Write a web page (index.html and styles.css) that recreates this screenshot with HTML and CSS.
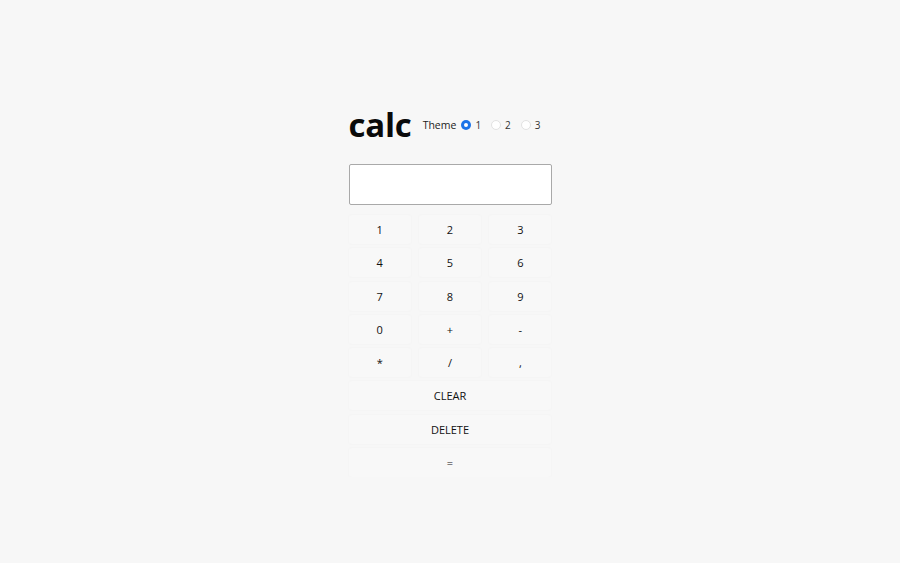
FILE: index.html
```html
<!DOCTYPE html>
<html lang="en">
<head>
<meta charset="utf-8">
<title>calc</title>
<link rel="stylesheet" href="styles.css">
</head>
<body>
<main class="calc">
  <header class="calc-header">
    <h1 class="calc-title">calc</h1>
    <div class="theme">
      <span class="theme-label">Theme</span>
      <label class="theme-opt"><input type="radio" name="theme" checked><span>1</span></label>
      <label class="theme-opt"><input type="radio" name="theme"><span>2</span></label>
      <label class="theme-opt"><input type="radio" name="theme"><span>3</span></label>
    </div>
  </header>
  <div class="display"></div>
  <div class="keys">
    <button class="key">1</button>
    <button class="key">2</button>
    <button class="key">3</button>
    <button class="key">4</button>
    <button class="key">5</button>
    <button class="key">6</button>
    <button class="key">7</button>
    <button class="key">8</button>
    <button class="key">9</button>
    <button class="key">0</button>
    <button class="key">+</button>
    <button class="key">-</button>
    <button class="key">*</button>
    <button class="key">/</button>
    <button class="key">,</button>
    <button class="key key-wide">CLEAR</button>
    <button class="key key-wide">DELETE</button>
    <button class="key key-wide">=</button>
  </div>
</main>
</body>
</html>
```
FILE: styles.css
```css
html, body {
  margin: 0;
  padding: 0;
  background: #f7f7f7;
  font-family: "Open Sans", "Noto Sans", sans-serif;
  color: #222;
}
body {
  display: flex;
  justify-content: center;
  padding-top: 104px;
}
.calc {
  width: 203px;
  display: flex;
  flex-direction: column;
}
.calc-header {
  display: flex;
  align-items: center;
  height: 42px;
}
.calc-title {
  margin: 0;
  font-size: 33px;
  font-weight: 700;
  color: #0a0a0a;
  line-height: 42px;
  letter-spacing: -0.2px;
}
.theme {
  display: flex;
  align-items: center;
  margin-left: 11px;
  font-size: 10.5px;
  color: #222;
  margin-top: -1px;
}
.theme-label {
  margin-right: 5px;
}
.theme-opt {
  display: flex;
  align-items: center;
  margin-right: 10px;
}
.theme-opt:last-child {
  margin-right: 0;
}
.theme-opt input {
  appearance: none;
  -webkit-appearance: none;
  box-sizing: border-box;
  width: 10px;
  height: 10px;
  margin: 0 4px 0 0;
  border-radius: 50%;
  border: 1px solid #e2e2e2;
  background: #fff;
}
.theme-opt input:checked {
  border: none;
  background: #fff;
  box-shadow: inset 0 0 0 3px #1a73e8;
}
.theme-opt span {
  font-size: 10px;
  color: #333;
}
.display {
  margin-top: 18px;
  height: 39px;
  background: #fff;
  border: 1px solid #a9a9a9;
  border-radius: 2px;
}
.keys {
  margin-top: 10px;
  display: grid;
  grid-template-columns: repeat(3, 1fr);
  column-gap: 8px;
  row-gap: 4.3px;
}
.key {
  height: 29px;
  border: none;
  border-radius: 3px;
  background: #f8f8f8;
  box-shadow: 0 0 0 1px #f5f5f5;
  font-family: "Open Sans", "Noto Sans", sans-serif;
  font-size: 11px;
  color: #111;
  padding: 0;
}
.key-wide {
  grid-column: 1 / -1;
}
```
